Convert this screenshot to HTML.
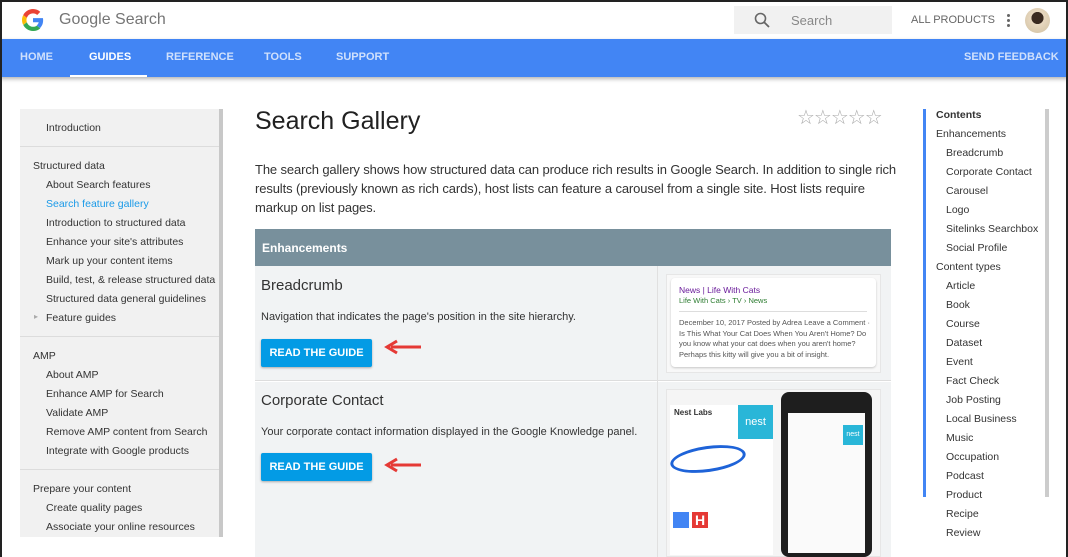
<!DOCTYPE html>
<html><head><meta charset="utf-8"><style>
*{box-sizing:border-box;margin:0;padding:0}
body{width:1068px;height:557px;overflow:hidden;font-family:"Liberation Sans",Arial,sans-serif;background:#fff;position:relative;color:#212121}
.frame{position:absolute;inset:0;border:2px solid #222;border-bottom:none;z-index:50;pointer-events:none}
.hdr{position:absolute;left:0;top:0;width:1068px;height:39px;background:#fff}
.nav{position:absolute;left:0;top:39px;width:1068px;height:38px;background:#4285f4;box-shadow:0 2px 4px rgba(0,0,0,.3)}
.nav span{position:absolute;top:12px;font-size:11px;font-weight:bold;color:#cfe0fc}
.a{position:absolute;white-space:nowrap}
.side{position:absolute;left:20px;top:109px;width:203px;height:428px;background:#f1f1f1;border-right:4px solid #c8c8c8}
.side div{position:absolute;font-size:10.5px;color:#333;white-space:nowrap}
.side hr{position:absolute;left:0;width:199px;border:none;border-top:1px solid #dcdcdc}
.toc div{position:absolute;font-size:10.5px;color:#333;white-space:nowrap}
.btn{position:absolute;left:261px;width:111px;height:28px;background:#039be5;color:#fff;font-size:11px;font-weight:bold;text-align:center;line-height:28px;border-radius:2px;box-shadow:0 1px 2px rgba(0,0,0,.3)}
</style></head><body>
<div class="frame"></div>
<div class="hdr">
<svg class="a" style="left:22px;top:9px" width="22" height="22" viewBox="0 0 48 48"><path fill="#EA4335" d="M24 9.5c3.5 0 6.6 1.2 9.1 3.6l6.8-6.8C35.8 2.4 30.3 0 24 0 14.6 0 6.6 5.4 2.7 13.3l7.9 6.1C12.5 13.6 17.8 9.5 24 9.5z"/><path fill="#4285F4" d="M46.1 24.6c0-1.600-.1-3.1-.4-4.6H24v9h12.4c-.5 2.9-2.2 5.3-4.6 7l7.4 5.7c4.3-4 6.9-9.9 6.9-17.1z"/><path fill="#FBBC05" d="M10.5 28.6c-.5-1.5-.8-3-.8-4.6s.3-3.1.8-4.6l-7.9-6.1C1 16.6 0 20.2 0 24s.9 7.4 2.6 10.7l7.9-6.1z"/><path fill="#34A853" d="M24 48c6.5 0 11.9-2.1 15.9-5.8l-7.4-5.7c-2.1 1.4-4.8 2.3-8.4 2.3-6.2 0-11.5-4.2-13.4-9.9l-7.9 6.1C6.6 42.6 14.6 48 24 48z"/></svg>
<div class="a" style="left:59px;top:11px;font-size:16px;color:#757575">Google Search</div>
<div class="a" style="left:734px;top:6px;width:158px;height:28px;background:#f1f1f1"></div>
<svg class="a" style="left:754px;top:12px" width="16" height="16" viewBox="0 0 16 16"><circle cx="6.5" cy="6.5" r="5" fill="none" stroke="#666" stroke-width="1.6"/><path d="M10.2 10.2L15 15" stroke="#666" stroke-width="1.8"/></svg>
<div class="a" style="left:791px;top:13px;font-size:13px;color:#888">Search</div>
<div class="a" style="left:911px;top:14px;font-size:11px;color:#666">ALL PRODUCTS</div>
<div class="a" style="left:1007px;top:14px;width:3px;height:3px;background:#666;border-radius:50%;box-shadow:0 5px 0 #666,0 10px 0 #666"></div>
<div class="a" style="left:1025px;top:8px;width:25px;height:25px;border-radius:50%;background:radial-gradient(circle at 50% 40%,#3a2a20 30%,#e8d8c0 32%,#d0c0a0)"></div>
</div>
<div class="nav">
<span style="left:20px">HOME</span>
<span style="left:89px;color:#fff">GUIDES</span>
<div class="a" style="left:70px;top:36px;width:77px;height:2px;background:#fff"></div>
<span style="left:166px">REFERENCE</span>
<span style="left:264px">TOOLS</span>
<span style="left:336px">SUPPORT</span>
<span style="left:964px">SEND FEEDBACK</span>
</div>
<div class="side">
<div style="left:26px;top:13px">Introduction</div>
<hr style="top:37px">
<div style="left:13px;top:51px">Structured data</div>
<div style="left:26px;top:70px">About Search features</div>
<div style="left:26px;top:89px;color:#1a9ae8">Search feature gallery</div>
<div style="left:26px;top:108px">Introduction to structured data</div>
<div style="left:26px;top:127px">Enhance your site's attributes</div>
<div style="left:26px;top:146px">Mark up your content items</div>
<div style="left:26px;top:165px">Build, test, &amp; release structured data</div>
<div style="left:26px;top:184px">Structured data general guidelines</div>
<div style="left:14px;top:203px;color:#aaa;font-size:8px">▸</div>
<div style="left:26px;top:203px">Feature guides</div>
<hr style="top:227px">
<div style="left:13px;top:241px">AMP</div>
<div style="left:26px;top:260px">About AMP</div>
<div style="left:26px;top:279px">Enhance AMP for Search</div>
<div style="left:26px;top:298px">Validate AMP</div>
<div style="left:26px;top:317px">Remove AMP content from Search</div>
<div style="left:26px;top:336px">Integrate with Google products</div>
<hr style="top:360px">
<div style="left:13px;top:374px">Prepare your content</div>
<div style="left:26px;top:393px">Create quality pages</div>
<div style="left:26px;top:412px">Associate your online resources</div>
</div>
<div class="a" style="left:255px;top:107px;font-size:25px;color:#212121">Search Gallery</div>
<div class="a" style="left:797px;top:105px;font-size:20px;color:#aaa;letter-spacing:-1px">☆☆☆☆☆</div>
<div class="a" style="left:255px;top:160px;font-size:13px;line-height:19px;color:#333;letter-spacing:-0.12px">The search gallery shows how structured data can produce rich results in Google Search. In addition to single rich<br>results (previously known as rich cards), host lists can feature a carousel from a single site. Host lists require<br>markup on list pages.</div>
<div class="a" style="left:255px;top:229px;width:636px;height:37px;background:#78909c"></div>
<div class="a" style="left:262px;top:241px;font-size:12px;font-weight:bold;color:#fff">Enhancements</div>
<div class="a" style="left:255px;top:266px;width:636px;height:115px;background:#f1f3f4;border-bottom:1px solid #ddd"></div>
<div class="a" style="left:255px;top:382px;width:636px;height:175px;background:#f1f3f4"></div>
<div class="a" style="left:657px;top:266px;width:1px;height:291px;background:#e0e0e0"></div>
<div class="a" style="left:261px;top:277px;font-size:15px;color:#333">Breadcrumb</div>
<div class="a" style="left:261px;top:311px;font-size:11px;color:#333">Navigation that indicates the page's position in the site hierarchy.</div>
<div class="btn" style="top:339px">READ THE GUIDE</div>
<svg class="a" style="left:383px;top:339px" width="40" height="16"><path d="M38 8H8M14 2L4 8l10 6" stroke="#e53935" stroke-width="3" fill="none"/></svg>
<div class="a" style="left:261px;top:392px;font-size:15px;color:#333">Corporate Contact</div>
<div class="a" style="left:261px;top:426px;font-size:11px;color:#333">Your corporate contact information displayed in the Google Knowledge panel.</div>
<div class="btn" style="top:453px">READ THE GUIDE</div>
<svg class="a" style="left:383px;top:457px" width="40" height="16"><path d="M38 8H8M14 2L4 8l10 6" stroke="#e53935" stroke-width="3" fill="none"/></svg>
<div class="a" style="left:666px;top:274px;width:215px;height:99px;background:#f8f8f8;border:1px solid #e6e6e6"></div>
<div class="a" style="left:671px;top:278px;width:205px;height:89px;background:#fff;border-radius:4px;box-shadow:0 1px 2px rgba(0,0,0,.2)"></div>
<div class="a" style="left:679px;top:285px;font-size:8.5px;color:#6a1b9a">News | Life With Cats</div>
<div class="a" style="left:679px;top:296px;font-size:7.5px;color:#2e7d32">Life With Cats › TV › News</div>
<div class="a" style="left:679px;top:311px;width:188px;border-top:1px solid #ddd"></div>
<div class="a" style="left:679px;top:318px;width:196px;font-size:7.5px;line-height:10.5px;color:#555;white-space:normal">December 10, 2017 Posted by Adrea Leave a Comment · Is This What Your Cat Does When You Aren't Home? Do you know what your cat does when you aren't home? Perhaps this kitty will give you a bit of insight.</div>
<div class="a" style="left:666px;top:389px;width:215px;height:168px;background:#f5f5f5;border:1px solid #e6e6e6"></div>
<div class="a" style="left:670px;top:405px;width:103px;height:150px;background:#fff"></div>
<div class="a" style="left:674px;top:408px;font-size:8px;font-weight:bold;color:#333">Nest Labs</div>
<div class="a" style="left:738px;top:405px;width:35px;height:34px;background:#29b6d8;color:#fff;font-size:11px;text-align:center;line-height:34px">nest</div>
<div class="a" style="left:670px;top:446px;width:76px;height:26px;border:3px solid #1e63d8;border-radius:50%;transform:rotate(-8deg)"></div>
<div class="a" style="left:673px;top:512px;width:16px;height:16px;background:#4285f4"></div>
<div class="a" style="left:692px;top:512px;width:16px;height:16px;background:#e53935;color:#fff;font-weight:bold;font-size:14px;text-align:center;line-height:16px">H</div>
<div class="a" style="left:781px;top:392px;width:91px;height:165px;background:#1e1e1e;border-radius:8px"></div>
<div class="a" style="left:788px;top:413px;width:77px;height:140px;background:#fafafa"></div>
<div class="a" style="left:843px;top:425px;width:20px;height:20px;background:#29b6d8;color:#fff;font-size:7px;text-align:center;line-height:20px">nest</div>
<div class="toc">
<div class="a" style="left:923px;top:109px;width:3px;height:388px;background:#4285f4"></div>
<div class="a" style="left:1045px;top:109px;width:4px;height:388px;background:#ccc"></div>
<div style="left:936px;top:109px;font-weight:bold">Contents</div>
<div style="left:936px;top:128px">Enhancements</div>
<div style="left:946px;top:147px">Breadcrumb</div>
<div style="left:946px;top:166px">Corporate Contact</div>
<div style="left:946px;top:185px">Carousel</div>
<div style="left:946px;top:204px">Logo</div>
<div style="left:946px;top:223px">Sitelinks Searchbox</div>
<div style="left:946px;top:242px">Social Profile</div>
<div style="left:936px;top:261px">Content types</div>
<div style="left:946px;top:280px">Article</div>
<div style="left:946px;top:299px">Book</div>
<div style="left:946px;top:318px">Course</div>
<div style="left:946px;top:337px">Dataset</div>
<div style="left:946px;top:356px">Event</div>
<div style="left:946px;top:375px">Fact Check</div>
<div style="left:946px;top:394px">Job Posting</div>
<div style="left:946px;top:413px">Local Business</div>
<div style="left:946px;top:432px">Music</div>
<div style="left:946px;top:451px">Occupation</div>
<div style="left:946px;top:470px">Podcast</div>
<div style="left:946px;top:489px">Product</div>
<div style="left:946px;top:508px">Recipe</div>
<div style="left:946px;top:527px">Review</div>
</div>
</body></html>
